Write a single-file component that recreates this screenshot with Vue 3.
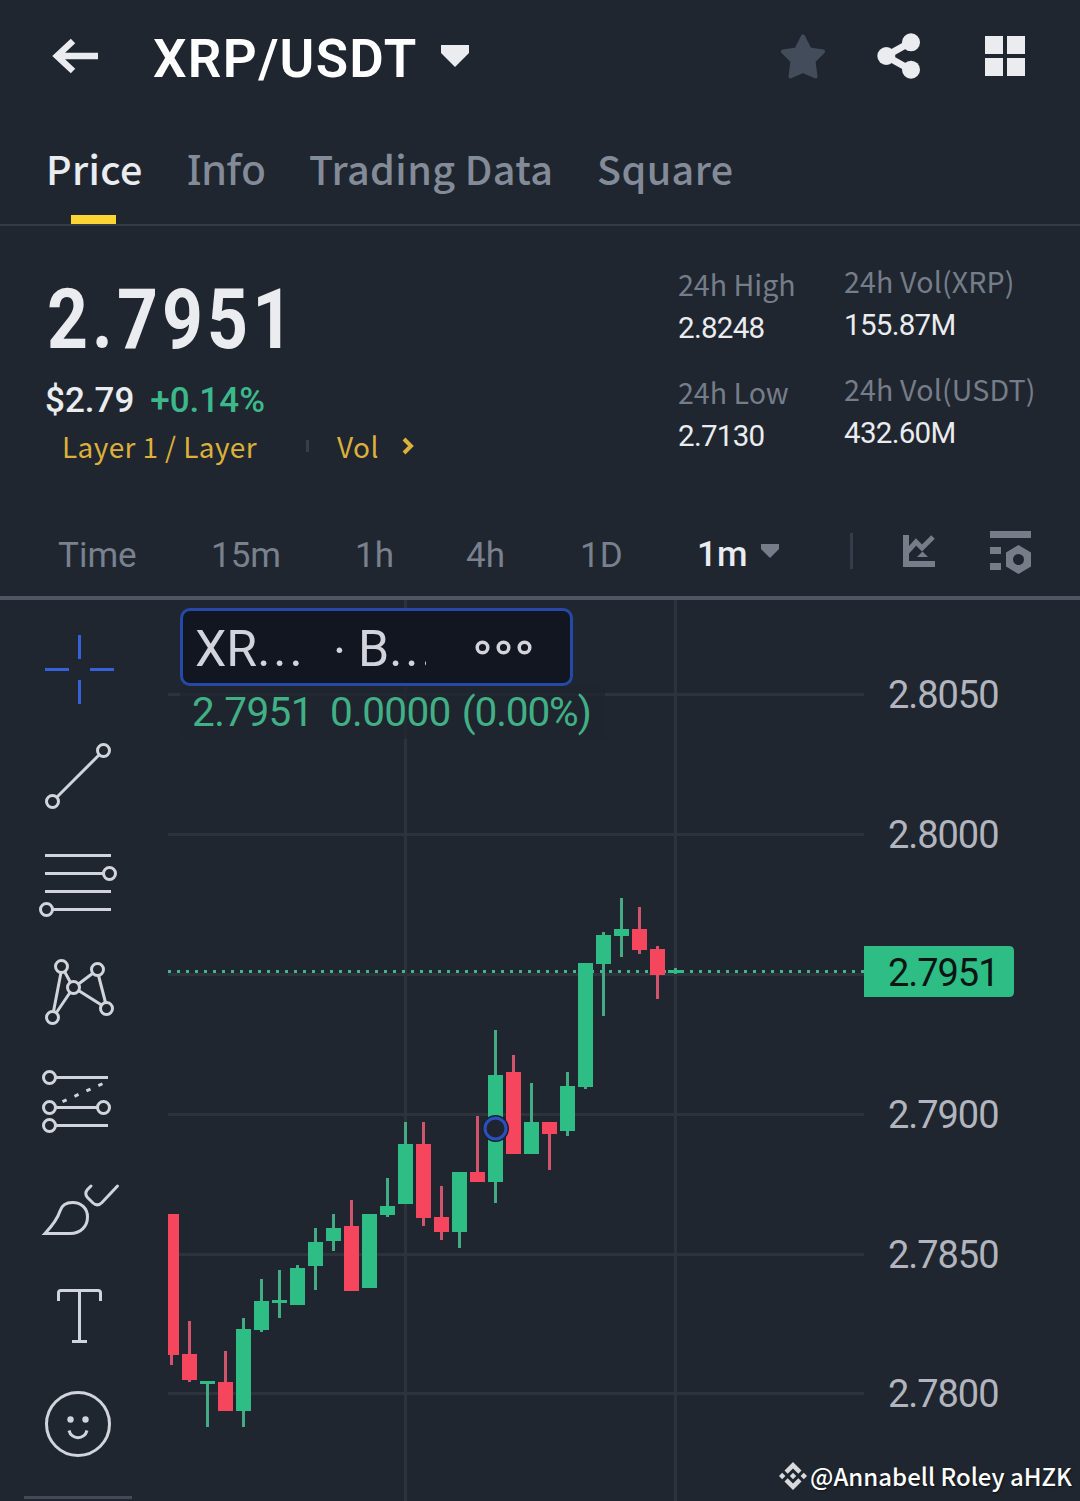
<template>
  <div class="page">
    <header class="header">
      <svg class="back" width="46" height="36" viewBox="0 0 46 36">
        <path d="M21 3 L5 18 L21 33 M5 18 H46" fill="none" stroke="#eaecef" stroke-width="6.500" />
      </svg>
      <h1 class="pair">XRP/USDT</h1>
      <svg class="pair-caret" width="28" height="22" viewBox="0 0 28 22">
        <path d="M0 0 H28 V8 L14 22 L0 8 Z" fill="#eaecef" />
      </svg>
      <div class="actions">
        <svg width="46" height="46" viewBox="0 0 46 46">
          <path d="M23 3.500 L29.500 16.500 L43 18.500 L33.500 28 L35.500 43.500 L23 38 L10.500 43.500 L12.500 28 L3 18.500 L16.500 16.500 Z" fill="#434c5a" stroke="#434c5a" stroke-width="4" stroke-linejoin="round" />
        </svg>
        <svg width="44" height="46" viewBox="0 0 44 46">
          <path d="M34 9 L9 23 L34 37" fill="none" stroke="#eaecef" stroke-width="7" />
          <circle cx="34" cy="9.300" r="9" fill="#eaecef" />
          <circle cx="9.300" cy="23" r="9" fill="#eaecef" />
          <circle cx="34" cy="36.700" r="9" fill="#eaecef" />
        </svg>
        <svg width="40" height="40" viewBox="0 0 40 40">
          <path d="M0 0h18v18H0zM22 0h18v18H22zM0 22h18v18H0zM22 22h18v18H22z" fill="#eaecef" />
        </svg>
      </div>
    </header>

    <nav class="tabs">
      <div v-for="tab in tabs" :key="tab.name" class="tab" :class="[tab.cls, { active: tab.name === activeTab }]" @click="activeTab = tab.name">
        <span>{{ tab.name }}</span>
      </div>
    </nav>

    <section class="summary">
      <div class="quote">
        <div class="last-price">2.7951</div>
        <div class="fiat">
          <span>$2.79</span>
          <span class="change">+0.14%</span>
        </div>
        <div class="tags">
          <span class="layer">Layer 1 / Layer</span>
          <i class="tag-line"></i>
          <span class="vol">Vol</span>
          <svg width="12" height="18" viewBox="0 0 12 18">
            <path d="M2 2 L9 9 L2 16" fill="none" stroke="#dcb03a" stroke-width="4" />
          </svg>
        </div>
      </div>
      <div v-for="(column, i) in stats" :key="i" class="stats">
        <div v-for="item in column" :key="item.label" class="stat">
          <div class="stat-label">{{ item.label }}</div>
          <div class="stat-value">{{ item.value }}</div>
        </div>
      </div>
    </section>

    <div class="intervals">
      <span v-for="item in intervals" :key="item" :class="{ selected: item === '1m' }">{{ item }}</span>
      <svg class="caret" width="18" height="14" viewBox="0 0 18 14">
        <path d="M0 0 H18 V5 L9 14 L0 5 Z" fill="#757d89" />
      </svg>
      <i class="bar-line"></i>
      <svg class="type-icon" width="32" height="32" viewBox="0 0 32 32">
        <path d="M0 0 H6 V26 H32 V32 H0 Z" fill="#757d89" />
        <path d="M4 17 L13 7 L19 13 L30 2" fill="none" stroke="#757d89" stroke-width="5" />
        <path d="M14 22 L19.500 16.500 L25 22 Z" fill="#757d89" />
      </svg>
      <svg class="settings-icon" width="42" height="44" viewBox="0 0 42 44">
        <path d="M0 0H41V7H0z M0 16H11V23H0z M0 32H11V39H0z" fill="#757d89" />
        <path fill-rule="evenodd" d="M28.500 14 L41 21.500 V35.500 L28.500 43 L16 35.500 V21.500 Z M28.500 23 a5.500 5.500 0 1 0 0 11 a5.500 5.500 0 1 0 0 -11 Z" fill="#757d89" />
      </svg>
    </div>

    <main class="workspace">
      <aside class="toolbar">
        <svg class="tool cross" viewBox="0 615 168 108">
          <path d="M79.500 635V659 M79.500 680V704 M45 669.500H69 M90 669.500H114" />
        </svg>
        <svg class="tool" viewBox="0 723 168 108">
          <circle cx="52.500" cy="801.500" r="6" />
          <circle cx="103.500" cy="750.500" r="6" />
          <path d="M57 797 L99 755" />
        </svg>
        <svg class="tool" viewBox="0 831 168 108">
          <path d="M45 855.500H111 M45 873.500H103 M45 891.500H111 M53 909.500H111" />
          <circle cx="109.500" cy="873.500" r="6" />
          <circle cx="46.500" cy="909.500" r="6" />
        </svg>
        <svg class="tool" viewBox="0 939 168 108">
          <path d="M61 972.500 L53.500 1011.500 M64.500 971.500 L70.500 982.500 M70 992.500 L56.500 1012.500 M78.500 984 L92.500 973.500 M78.500 990.500 L101.500 1005 M98.500 975.500 L105.500 1002.500" />
          <circle cx="61.500" cy="966.500" r="6" />
          <circle cx="97.500" cy="969.500" r="6" />
          <circle cx="73.500" cy="987.500" r="6" />
          <circle cx="52.500" cy="1017.500" r="6" />
          <circle cx="106.500" cy="1008.500" r="6" />
        </svg>
        <svg class="tool" viewBox="0 1047 168 108">
          <path d="M56 1077.500H108 M56 1107.500H97 M56 1125.500H108" />
          <path d="M62.500 1101.700 L103 1083.500" stroke-dasharray="4.500 8.600" />
          <circle cx="49.500" cy="1077.500" r="6" />
          <circle cx="49.500" cy="1107.500" r="6" />
          <circle cx="103.500" cy="1107.500" r="6" />
          <circle cx="49.500" cy="1125.500" r="6" />
        </svg>
        <svg class="tool" viewBox="0 1155 168 108">
          <path d="M45 1233.500 H70 C81 1233.500 87.500 1226 87.500 1217 C87.500 1208 81 1202.500 72.500 1202.500 C66 1202.500 61.500 1206 60 1211 C57.500 1219 52 1226 45 1233.500 Z" />
          <path d="M91 1186 L87.500 1189.500 Q84 1193.500 87.500 1197.500 L93 1203 Q97.500 1207 102 1202.500 L117.500 1186" stroke-linecap="round" />
        </svg>
        <svg class="tool" viewBox="0 1263 168 108">
          <path d="M58.500 1301 V1293 Q58.500 1290.500 61 1290.500 H98 Q100.500 1290.500 100.500 1293 V1301 M79.500 1290.500 V1341.500 M72 1341.500 H87" />
        </svg>
        <svg class="tool" viewBox="0 1371 168 108">
          <circle cx="78" cy="1424" r="31.500" />
          <circle class="eye" cx="70.500" cy="1419.500" r="3.200" />
          <circle class="eye" cx="85.500" cy="1419.500" r="3.200" />
          <path d="M69 1430.500 C71.500 1440 84.500 1440 87 1430.500" />
        </svg>
        <i class="tool-line"></i>
      </aside>

      <div class="chart">
        <svg width="912" height="905" viewBox="168 596 912 905">
          <g stroke="#2d333d" stroke-width="3">
            <line v-for="x in [405.5, 675.5]" :key="x" :x1="x" :x2="x" y1="600" y2="1501" />
            <line v-for="row in rows" :key="row.y" x1="168" x2="864" :y1="row.y" :y2="row.y" />
          </g>
          <line x1="168" x2="864" y1="971.5" y2="971.5" stroke="#42b78a" stroke-width="3" stroke-dasharray="3 6" />
          <g v-for="c in candles" :key="c.x" :fill="c.up ? '#2ebd85' : '#f6465d'">
            <rect :x="c.x - 1.5" :y="c.high" width="3" :height="c.low - c.high" :fill="c.up ? '#43ac82' : '#cf546c'" />
            <rect :x="c.left" :y="c.top" :width="c.x + 7.5 - c.left" :height="c.bottom - c.top" />
          </g>
          <circle cx="495.500" cy="1128.500" r="13.500" fill="#1a202b" />
          <circle cx="495.500" cy="1128.500" r="10.500" fill="#1f2530" stroke="#2a50bd" stroke-width="3" />
          <text v-for="row in labelRows" :key="row.label" class="axis" x="888" :y="row.y + 13" textLength="111.500">{{ row.label }}</text>
          <path d="M864 946 H1009 Q1014 946 1014 951 V992 Q1014 997 1009 997 H864 Z" fill="#2ebd85" />
          <text class="axis current" x="888" y="985.500" textLength="111.500">2.7951</text>
        </svg>

        <div class="legend">
          <div class="symbol-box">
            <span class="symbol">XR<span class="dots">...</span></span>
            <span class="dot">·</span>
            <span class="exchange">B<span class="dots">...</span></span>
            <svg width="57" height="15" viewBox="0 0 57 15" fill="none" stroke="#d1d4dc" stroke-width="3.500">
              <circle cx="7.500" cy="7.500" r="5.300" />
              <circle cx="28.500" cy="7.500" r="5.300" />
              <circle cx="49.500" cy="7.500" r="5.300" />
            </svg>
          </div>
          <div class="legend-values">
            <span>2.7951</span>
            <span class="diff">0.0000</span>
            <span class="percent">(0.00%)</span>
          </div>
        </div>

        <div class="watermark">
          <svg width="28" height="28" viewBox="-14 -14 28 28" fill="#d9dadb">
            <path d="M0 -14 L8.500 -5.500 L5.300 -2.300 L0 -7.600 L-5.300 -2.300 L-8.500 -5.500 Z" />
            <path d="M0 14 L8.500 5.500 L5.300 2.300 L0 7.600 L-5.300 2.300 L-8.500 5.500 Z" />
            <path d="M0 -3.200 L3.200 0 L0 3.200 L-3.200 0 Z M-10.800 -3.200 L-7.600 0 L-10.800 3.200 L-14 0 Z M10.800 -3.200 L14 0 L10.800 3.200 L7.600 0 Z" />
          </svg>
          <span>@Annabell Roley aHZK</span>
        </div>
      </div>
    </main>
  </div>
</template>

<script setup>
import { ref, computed } from 'vue'

const activeTab = ref('Price')

const tabs = [
  { name: 'Price', cls: 'price' },
  { name: 'Info', cls: 'info' },
  { name: 'Trading Data', cls: 'trading' },
  { name: 'Square', cls: 'square' }
]

const stats = [
  [
    { label: '24h High', value: '2.8248' },
    { label: '24h Low', value: '2.7130' }
  ],
  [
    { label: '24h Vol(XRP)', value: '155.87M' },
    { label: '24h Vol(USDT)', value: '432.60M' }
  ]
]

const intervals = ['Time', '15m', '1h', '4h', '1D', '1m']

const rows = [
  { y: 694.5, label: '2.8050' },
  { y: 834.5, label: '2.8000' },
  { y: 974.5, label: '' },
  { y: 1114.5, label: '2.7900' },
  { y: 1254.5, label: '2.7850' },
  { y: 1393.5, label: '2.7800' }
]

const labelRows = computed(() => rows.filter((row) => row.label))

// high, body top, body bottom, low, rising
const series = [
  [1214, 1214, 1355, 1365, 0],
  [1321, 1354, 1380, 1382, 0],
  [1381, 1381, 1384, 1427, 1],
  [1351, 1382, 1411, 1411, 0],
  [1318, 1329, 1411, 1427, 1],
  [1279, 1301, 1330, 1332, 1],
  [1270, 1300, 1303, 1318, 1],
  [1265, 1268, 1305, 1305, 1],
  [1228, 1242, 1266, 1290, 1],
  [1214, 1228, 1241, 1251, 1],
  [1200, 1226, 1291, 1291, 0],
  [1214, 1214, 1288, 1288, 1],
  [1178, 1206, 1215, 1217, 1],
  [1122, 1144, 1204, 1204, 1],
  [1122, 1144, 1218, 1226, 0],
  [1186, 1217, 1232, 1240, 0],
  [1172, 1172, 1232, 1248, 1],
  [1116, 1172, 1182, 1182, 0],
  [1030, 1075, 1182, 1203, 1],
  [1055, 1072, 1154, 1154, 0],
  [1083, 1122, 1154, 1154, 1],
  [1122, 1122, 1134, 1170, 0],
  [1072, 1086, 1131, 1136, 1],
  [963, 963, 1087, 1089, 1],
  [932, 935, 964, 1016, 1],
  [898, 929, 936, 957, 1],
  [907, 929, 950, 954, 0],
  [946, 949, 975, 999, 0],
  [968, 970, 973, 974, 1]
]

const candles = series.map(([high, top, bottom, low, up], i) => {
  const x = 171.5 + i * 18
  return { x, left: Math.max(168, x - 7.5), high, top, bottom, low, up }
})
</script>

<style>
body {
  background: #1f2630;
}
</style>

<style scoped>
.page {
  width: 1080px;
  height: 1501px;
  overflow: hidden;
  background: #1f2630;
  color: #eaecef;
  font-family: Roboto, "Liberation Sans", sans-serif;
}

svg {
  display: block;
  flex: none;
}

.header {
  display: flex;
  align-items: center;
  height: 112px;
  padding: 0 55px 0 52px;
}

.pair {
  width: 288px;
  margin: 0 0 0 55px;
  padding-top: 6px;
  box-sizing: border-box;
  font-size: 53px;
  line-height: 60px;
  font-weight: 600;
  letter-spacing: 1.3px;
  color: #fff;
  white-space: nowrap;
}

.actions {
  display: flex;
  align-items: center;
  margin-left: auto;
}

.actions svg + svg {
  margin-left: 51px;
}

.actions svg:last-child {
  margin-left: 64px;
}

.tabs {
  display: grid;
  grid-template-columns: 141px 122px 288px auto;
  height: 112px;
  padding-left: 46px;
  border-bottom: 2px solid #343b46;
}

.tab {
  position: relative;
  font-family: "Noto Sans CJK SC", sans-serif;
  font-size: 39.5px;
  line-height: 112px;
  font-weight: 500;
  letter-spacing: 0.4px;
  color: #848b98;
  white-space: nowrap;
}

.tab.info {
  font-family: "Noto Sans", sans-serif;
  font-size: 41px;
  line-height: 114px;
  letter-spacing: -0.3px;
}

.tab.active {
  color: #eaecef;
}

.tab.active::after {
  content: "";
  position: absolute;
  left: 25px;
  bottom: 2px;
  width: 45px;
  height: 9px;
  background: #fcd535;
}

.summary {
  display: grid;
  grid-template-columns: 631px 166px auto;
  height: 284px;
  padding-left: 47px;
  box-sizing: border-box;
}

.quote {
  padding-top: 52px;
}

.last-price {
  font-size: 83px;
  line-height: 84px;
  font-weight: 700;
  letter-spacing: 4.8px;
  transform: scaleX(0.86);
  transform-origin: left;
}

.fiat {
  display: flex;
  gap: 16px;
  margin: 18px 0 0 -2px;
  font-size: 35px;
  line-height: 42px;
  font-weight: 500;
}

.change {
  color: #3cb88a;
}

.tags {
  display: flex;
  align-items: center;
  height: 40px;
  margin-top: 4px;
  padding-left: 15px;
  font-family: "Noto Sans CJK SC", sans-serif;
  font-size: 28px;
  line-height: 40px;
  letter-spacing: 0.4px;
  color: #dcb03a;
}

.layer {
  width: 244px;
}

.tag-line {
  width: 3px;
  height: 12px;
  margin-right: 28px;
  background: #373e49;
}

.vol {
  width: 65px;
}

.stats {
  padding-top: 37px;
}

.stats:last-child {
  padding-top: 34px;
}

.stat {
  height: 108px;
  white-space: nowrap;
}

.stat-label {
  font-family: "Noto Sans CJK SC", sans-serif;
  font-size: 28.6px;
  line-height: 42px;
  color: #757d89;
}

.stats:last-child .stat-label {
  letter-spacing: 0.15px;
}

.stat-value {
  margin-top: 2px;
  font-size: 29.5px;
  line-height: 42px;
  letter-spacing: -0.7px;
}

.intervals {
  display: grid;
  grid-template-columns: 153px 144px 111px 114px 117px 63px 90px 52px 87px auto;
  align-items: center;
  height: 86px;
  padding-left: 59px;
  border-bottom: 4px solid #4f5661;
  font-size: 35px;
  color: #7a818e;
}

.intervals span {
  padding-top: 4px;
  margin-left: -1px;
}

.intervals .selected {
  padding-top: 2px;
  font-weight: 500;
  color: #eaecef;
}

.caret {
  margin-top: -4px;
}

.bar-line {
  width: 3px;
  height: 36px;
  margin: -5px 0 0 -1px;
  background: #363d48;
}

.type-icon {
  margin-top: -4px;
}

.workspace {
  display: flex;
  height: 901px;
}

.toolbar {
  width: 168px;
  height: 886px;
  padding-top: 15px;
}

.tool {
  width: 168px;
  height: 108px;
  fill: none;
  stroke: #d1d4dc;
  stroke-width: 3;
}

.cross {
  stroke: #3761d6;
}

.eye {
  fill: #d1d4dc;
  stroke: none;
}

.tool-line {
  display: block;
  width: 108px;
  height: 3px;
  margin: 17px 0 0 24px;
  background: #434a56;
}

.chart {
  position: relative;
  width: 912px;
  margin-top: -4px;
}

.axis {
  font-size: 38px;
  fill: #b2b5be;
}

.axis.current {
  fill: #0c1512;
}

.legend {
  position: absolute;
  left: 12px;
  top: 12px;
}

.symbol-box {
  display: flex;
  align-items: center;
  width: 393px;
  height: 78px;
  padding-left: 12px;
  box-sizing: border-box;
  border: 3px solid #2648a8;
  border-radius: 10px;
  background: #121620;
  font-size: 50px;
  color: #d1d4dc;
}

.symbol,
.exchange {
  padding-top: 4px;
}

.symbol {
  width: 138px;
}

.dots {
  letter-spacing: 3px;
}

.dot {
  width: 25px;
  padding-top: 8px;
}

.exchange {
  width: 68px;
  margin-right: 49px;
  overflow: hidden;
  white-space: nowrap;
}

.legend-values {
  display: flex;
  width: 413px;
  padding-left: 12px;
  background: rgba(31, 38, 48, 0.8);
  font-size: 40.5px;
  line-height: 53px;
  letter-spacing: -0.6px;
  color: #42b085;
}

.diff {
  margin-left: 17px;
}

.percent {
  margin-left: 11px;
  letter-spacing: -1.1px;
}

.watermark {
  position: absolute;
  right: 8px;
  bottom: 7px;
  display: flex;
  align-items: center;
  gap: 3px;
  font-family: "Noto Sans CJK SC", sans-serif;
  font-size: 24px;
  line-height: 36px;
  font-weight: 500;
  color: #fff;
  text-shadow: 1px 1px 2px #0008;
}
</style>
